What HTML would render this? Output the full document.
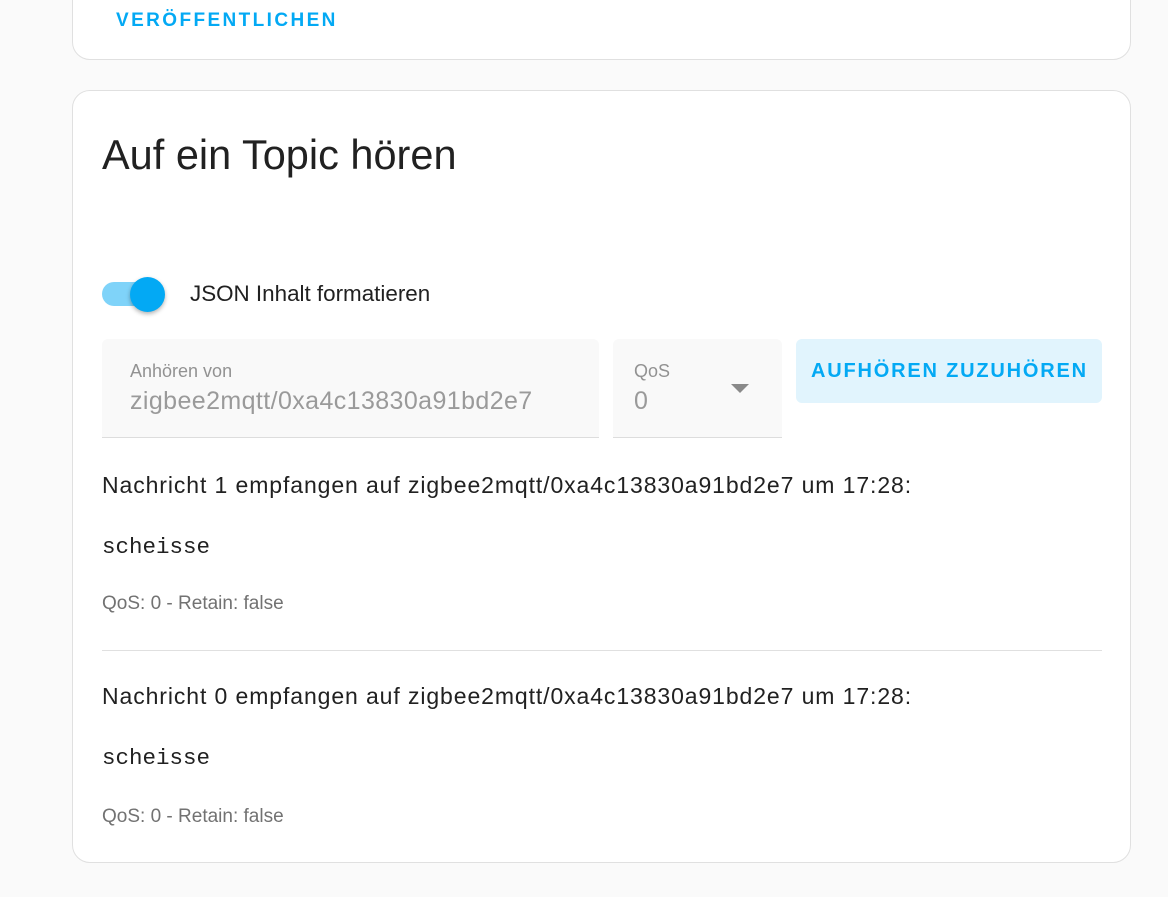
<!DOCTYPE html>
<html><head><meta charset="utf-8"><style>
*{box-sizing:border-box;margin:0;padding:0}
body{width:1168px;height:897px;background:#fafafa;font-family:"Liberation Sans",sans-serif;position:relative;overflow:hidden;color:#212121}
.card{position:absolute;left:72px;width:1059px;background:#fff;border:1px solid #e0e0e0;border-radius:18px}
.abs{position:absolute;white-space:nowrap}
.btn{color:#03a9f4;font-size:19px;letter-spacing:2.4px;font-weight:bold}
.msg{font-size:23px;letter-spacing:.9px;color:#212121}
.mono{font-family:"Liberation Mono",monospace;font-size:22.5px}
.meta{font-size:19px;color:#727272}
</style></head><body>
<div class="card" style="top:-20px;height:80px"></div>
<div class="abs btn" style="left:116px;top:10px">VERÖFFENTLICHEN</div>
<div class="card" style="top:90px;height:773px"></div>
<div class="abs" style="left:102px;top:131px;font-size:41.5px;color:#212121">Auf ein Topic hören</div>
<div class="abs" style="left:102px;top:282px;width:60px;height:24px;border-radius:12px;background:#7fd3f9"></div>
<div class="abs" style="left:130px;top:277px;width:35px;height:35px;border-radius:50%;background:#03a9f4;box-shadow:0 2px 4px rgba(0,0,0,.3)"></div>
<div class="abs" style="left:190px;top:281px;font-size:22.4px">JSON Inhalt formatieren</div>
<div class="abs" style="left:102px;top:339px;width:497px;height:99px;background:#f9f9f9;border-radius:6px 6px 0 0;border-bottom:1px solid #ddd"></div>
<div class="abs" style="left:130px;top:361px;font-size:18px;color:#929292">Anhören von</div>
<div class="abs" style="left:130px;top:387px;font-size:25px;letter-spacing:.4px;color:#9a9a9a">zigbee2mqtt/0xa4c13830a91bd2e7</div>
<div class="abs" style="left:613px;top:339px;width:169px;height:99px;background:#f9f9f9;border-radius:6px 6px 0 0;border-bottom:1px solid #ddd"></div>
<div class="abs" style="left:634px;top:361px;font-size:18px;color:#929292">QoS</div>
<div class="abs" style="left:634px;top:387px;font-size:25px;color:#9a9a9a">0</div>
<div class="abs" style="left:731px;top:384px;width:0;height:0;border-left:9px solid transparent;border-right:9px solid transparent;border-top:9px solid #8a8a8a"></div>
<div class="abs" style="left:796px;top:339px;width:306px;height:64px;background:#e1f4fd;border-radius:6px"></div>
<div class="abs btn" style="left:811px;top:360px;font-size:20px;letter-spacing:1.8px">AUFHÖREN ZUZUHÖREN</div>
<div class="abs msg" style="left:102px;top:472px">Nachricht 1 empfangen auf zigbee2mqtt/0xa4c13830a91bd2e7 um 17:28:</div>
<div class="abs mono" style="left:102px;top:534px">scheisse</div>
<div class="abs meta" style="left:102px;top:593px">QoS: 0 - Retain: false</div>
<div class="abs" style="left:102px;top:650px;width:1000px;height:1px;background:#e0e0e0"></div>
<div class="abs msg" style="left:102px;top:683px">Nachricht 0 empfangen auf zigbee2mqtt/0xa4c13830a91bd2e7 um 17:28:</div>
<div class="abs mono" style="left:102px;top:745px">scheisse</div>
<div class="abs meta" style="left:102px;top:806px">QoS: 0 - Retain: false</div>
</body></html>
